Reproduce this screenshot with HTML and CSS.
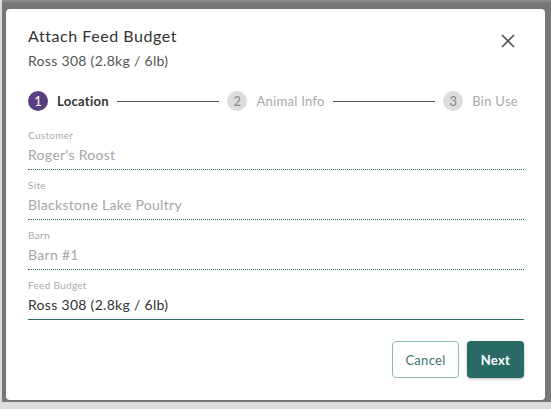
FILE: index.html
```html
<!DOCTYPE html>
<html lang="en">
<head>
  <meta charset="UTF-8">
  <meta name="viewport" content="width=device-width, initial-scale=1.0">
  <title>Attach Feed Budget</title>
  <link rel="stylesheet" href="styles.css">
</head>
<body>
  <div class="backdrop">
    <div class="dialog">
      <div class="dialog-header">
        <div>
          <h1 class="dialog-title">Attach Feed Budget</h1>
          <p class="dialog-subtitle">Ross 308 (2.8kg / 6lb)</p>
        </div>
        <button class="close-btn" aria-label="Close">
          <svg width="14" height="14" viewBox="0 0 14 14"><path d="M1 1L13 13M13 1L1 13" stroke="#555" stroke-width="1.6" fill="none"/></svg>
        </button>
      </div>

      <div class="stepper">
        <div class="step active"><span class="step-num">1</span><span class="step-label">Location</span></div>
        <div class="step-line"></div>
        <div class="step"><span class="step-num">2</span><span class="step-label">Animal Info</span></div>
        <div class="step-line"></div>
        <div class="step"><span class="step-num">3</span><span class="step-label">Bin Use</span></div>
      </div>

      <div class="fields">
        <div class="field disabled">
          <label>Customer</label>
          <div class="field-value">Roger's Roost</div>
        </div>
        <div class="field disabled">
          <label>Site</label>
          <div class="field-value">Blackstone Lake Poultry</div>
        </div>
        <div class="field disabled">
          <label>Barn</label>
          <div class="field-value">Barn #1</div>
        </div>
        <div class="field">
          <label>Feed Budget</label>
          <div class="field-value">Ross 308 (2.8kg / 6lb)</div>
        </div>
      </div>

      <div class="dialog-actions">
        <button class="btn btn-outline">Cancel</button>
        <button class="btn btn-primary">Next</button>
      </div>
    </div>
  </div>
</body>
</html>
```

FILE: styles.css
```css
html, body {
  margin: 0;
  height: 100%;
}
body {
  font-family: Lato, "Open Sans", Arial, sans-serif;
  background-color: #dcdcdc;
  color: #333;
  letter-spacing: 0.3px;
}
.backdrop {
  box-sizing: border-box;
  height: 402px;
  margin-left: 2px;
  padding: 7px 0 0 4px;
  background-color: #777;
  border-top: 2px solid #8a8a8a;
}
.dialog {
  box-sizing: border-box;
  width: 539px;
  height: 391px;
  padding: 16px 21px 22px 22px;
  background-color: white;
  border-radius: 4px;
  display: flex;
  flex-direction: column;
}
.dialog-header {
  display: flex;
  justify-content: space-between;
  align-items: flex-start;
}
.dialog-title {
  margin: 0;
  font-size: 16px;
  line-height: 22px;
  font-weight: 400;
  color: #333;
  letter-spacing: 0.55px;
}
.dialog-subtitle {
  margin: 4px 0 0;
  font-size: 14px;
  line-height: 20px;
  color: #555;
}
.close-btn {
  margin: 9px 9px 0 0;
  padding: 0;
  border: none;
  background: none;
  cursor: pointer;
  line-height: 0;
}
.stepper {
  display: flex;
  align-items: center;
  margin: 20px 6px 0 0;
  height: 20px;
}
.step {
  display: flex;
  align-items: center;
  gap: 9px;
  font-size: 13px;
  color: #aaa;
  white-space: nowrap;
}
.step-num {
  width: 20px;
  height: 20px;
  border-radius: 50%;
  background-color: #dcdcdc;
  color: #888;
  font-size: 13px;
  line-height: 20px;
  text-align: center;
  letter-spacing: 0;
}
.step.active .step-num {
  background-color: #5b3e80;
  color: white;
}
.step.active .step-label {
  color: #333;
  font-weight: 700;
}
.step-line {
  flex: 1;
  height: 1px;
  background-color: #555;
  margin: 0 8px;
}
.fields {
  margin-top: 17px;
}
.field {
  padding-bottom: 4px;
  margin-bottom: 8px;
  border-bottom: 1px solid #2b6b66;
}
.field.disabled {
  border-bottom-style: dotted;
}
.field label {
  display: block;
  font-size: 10px;
  line-height: 14px;
  color: #aaa;
  margin-bottom: 3px;
}
.field-value {
  font-size: 14px;
  line-height: 20px;
  color: #333;
}
.field.disabled .field-value {
  color: #a6a6a6;
}
.dialog-actions {
  margin-top: auto;
  display: flex;
  justify-content: flex-end;
  gap: 8px;
}
.btn {
  height: 37px;
  padding: 0 14px;
  font-family: inherit;
  font-size: 13px;
  letter-spacing: 0.3px;
  border-radius: 4px;
  cursor: pointer;
}
.btn-outline {
  width: 67px;
  padding: 0;
  background-color: white;
  color: #3d7571;
  border: 1px solid #8fb7b4;
}
.btn-primary {
  width: 57px;
  padding: 0;
  background-color: #2a6a65;
  color: white;
  font-weight: 700;
  border: none;
  box-shadow: 0 1px 3px rgba(0, 0, 0, 0.3);
}
```
